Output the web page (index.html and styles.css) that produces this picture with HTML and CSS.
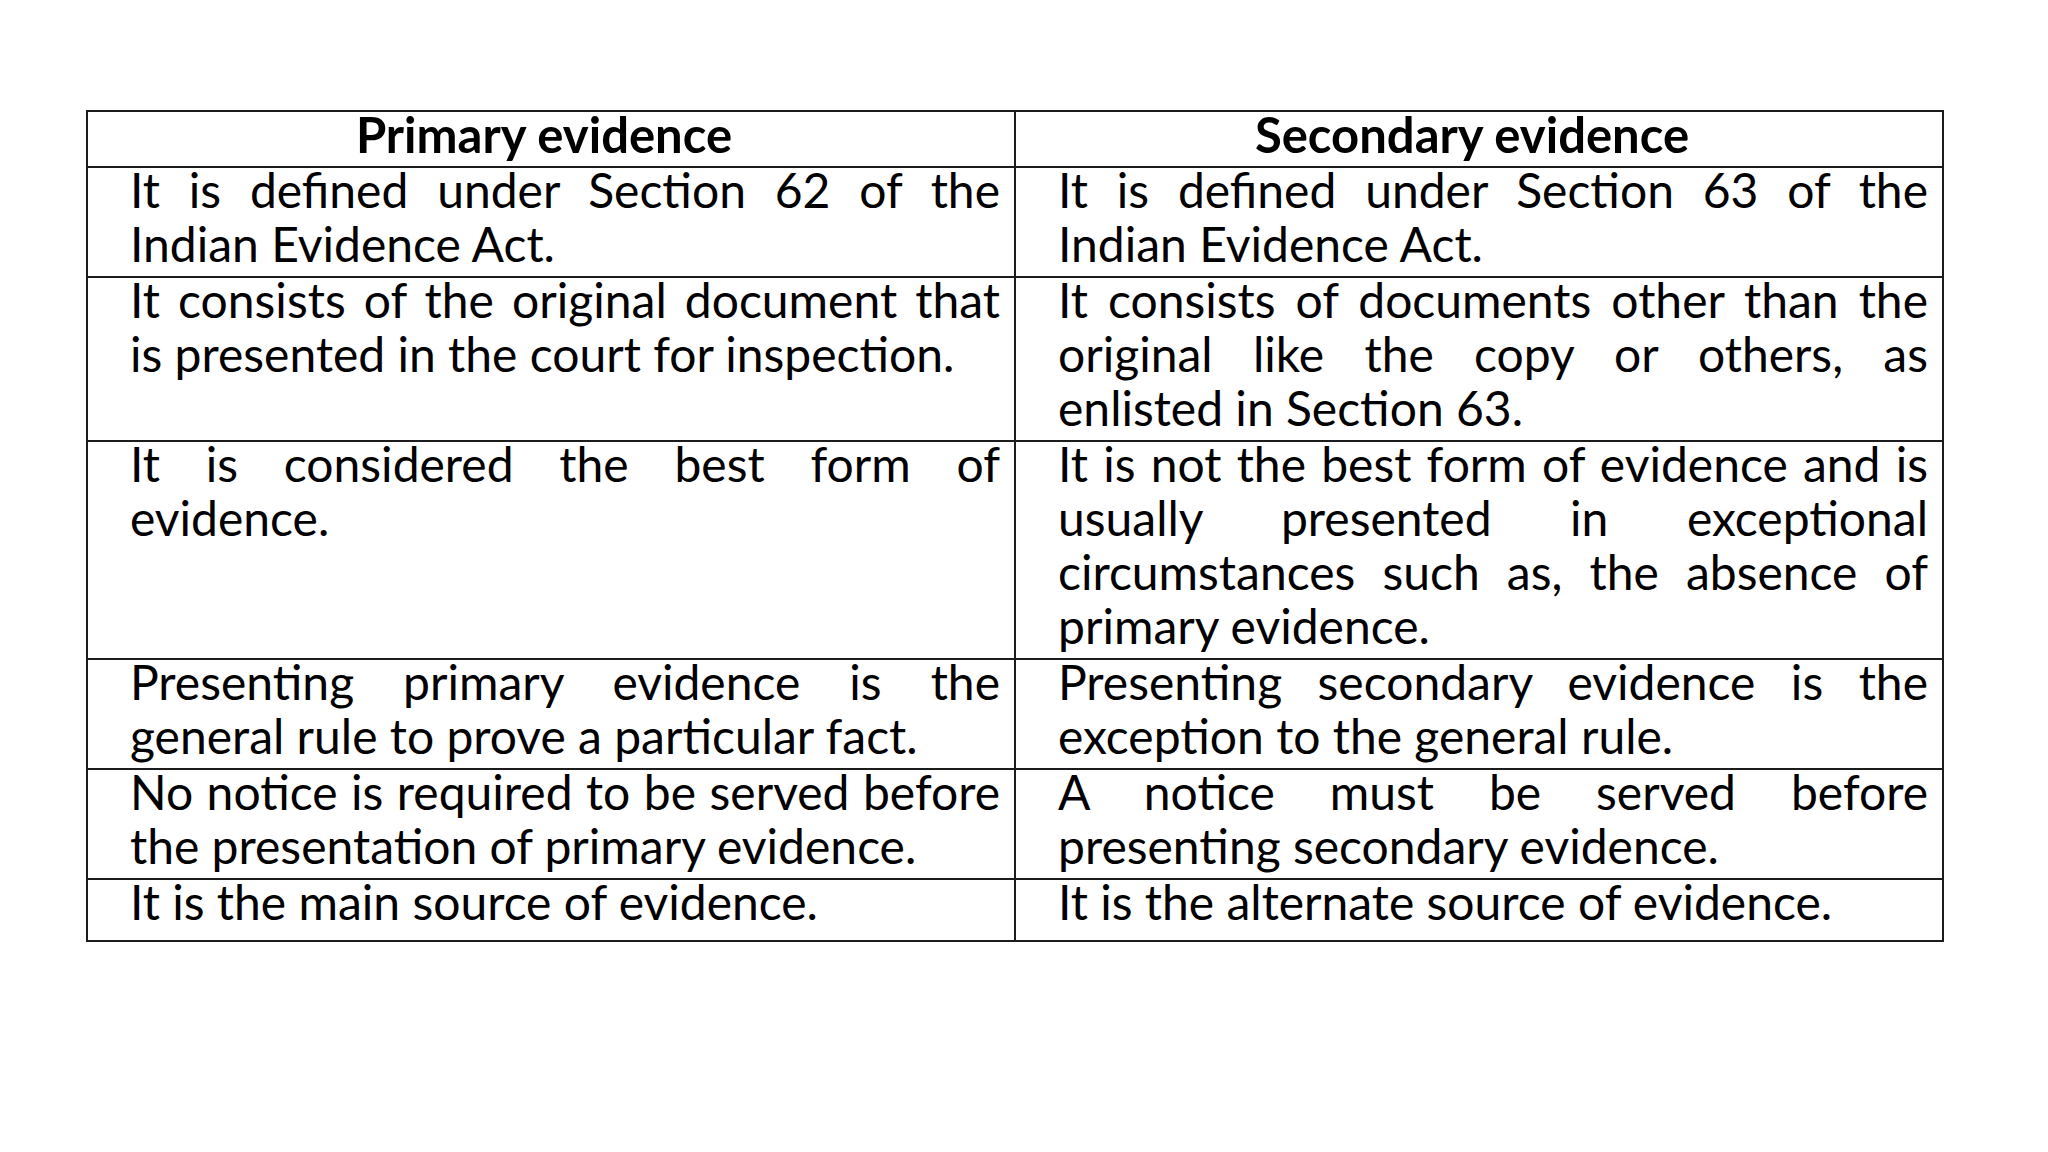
FILE: index.html
```html
<!DOCTYPE html>
<html lang="en">
<head>
<meta charset="utf-8">
<title>Primary vs Secondary evidence</title>
<link rel="stylesheet" href="styles.css">
</head>
<body>
<main class="page">
  <table class="compare">
    <thead>
      <tr>
        <th><div class="cell">Primary evidence</div></th>
        <th><div class="cell">Secondary evidence</div></th>
      </tr>
    </thead>
    <tbody>
      <tr>
        <td><div class="cell">It is defined under Section 62 of the Indian Evidence Act.</div></td>
        <td><div class="cell">It is defined under Section 63 of the Indian Evidence Act.</div></td>
      </tr>
      <tr>
        <td><div class="cell">It consists of the original document that is presented in the court for inspection.</div></td>
        <td><div class="cell">It consists of documents other than the original like the copy or others, as enlisted in Section 63.</div></td>
      </tr>
      <tr>
        <td><div class="cell">It is considered the best form of evidence.</div></td>
        <td><div class="cell">It is not the best form of evidence and is usually presented in exceptional circumstances such as, the absence of primary evidence.</div></td>
      </tr>
      <tr>
        <td><div class="cell">Presenting primary evidence is the general rule to prove a particular fact.</div></td>
        <td><div class="cell">Presenting secondary evidence is the exception to the general rule.</div></td>
      </tr>
      <tr>
        <td><div class="cell">No notice is required to be served before the presentation of primary evidence.</div></td>
        <td><div class="cell">A notice must be served before presenting secondary evidence.</div></td>
      </tr>
      <tr class="last">
        <td><div class="cell">It is the main source of evidence.</div></td>
        <td><div class="cell">It is the alternate source of evidence.</div></td>
      </tr>
    </tbody>
  </table>
</main>
</body>
</html>
```
FILE: styles.css
```css
html, body {
  margin: 0;
  padding: 0;
  background: #ffffff;
}

body {
  font-family: Lato, "Liberation Sans", sans-serif;
  color: #000000;
}

.page {
  padding: 110px 0 0 86px;
}

.compare {
  border-collapse: collapse;
  table-layout: fixed;
  width: 1858px;
  font-size: 48px;
  line-height: 54px;
}

.compare th,
.compare td {
  border: 2px solid #1c1c1c;
  vertical-align: top;
  width: 50%;
  padding-top: 0;
  padding-bottom: 5px;
}

.compare .cell {
  margin-top: -5px;
}

.compare th {
  font-size: 49px;
  font-weight: 700;
  text-align: center;
  padding-left: 0;
  padding-right: 14px;
}

.compare td {
  font-weight: 400;
  text-align: justify;
  padding-left: 42px;
  padding-right: 14px;
}

.compare tr.last td {
  padding-bottom: 11px;
}
```
